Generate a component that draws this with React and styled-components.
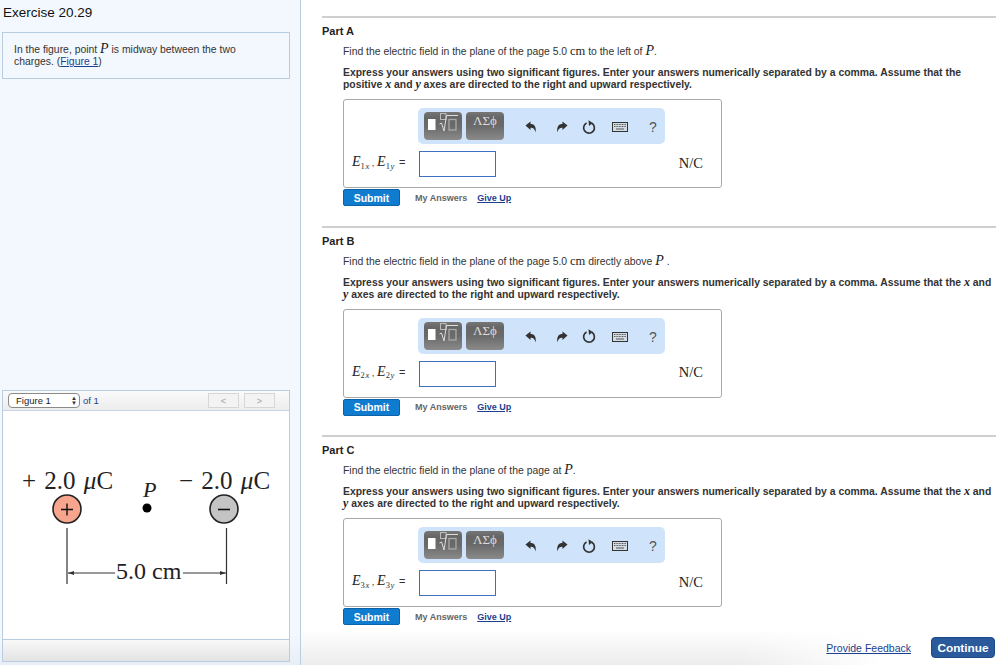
import React from "react";
import styled, { createGlobalStyle } from "styled-components";

const GlobalStyle = createGlobalStyle`
    html, body {
        margin: 0;
        padding: 0;
        background: #fff;
        font-family: "Liberation Sans", Arial, sans-serif;
        color: #222;
    }
`

const Page = styled.div`
    display: flex;
    width: 1008px;
    height: 665px;
    overflow: hidden;
`

const Sidebar = styled.div`
    display: flex;
    flex-direction: column;
    box-sizing: border-box;
    width: 301px;
    height: 665px;
    padding: 6px 10px 3px 2px;
    background:
        linear-gradient(to top, #e8eef6, rgba(243, 248, 254, 0) 30px),
        #f3f8fe;
    border-right: 1px solid #b9cde0;
`

const Heading = styled.h1`
    margin: 0 0 12px 1px;
    font-size: 13.5px;
    line-height: 14px;
    font-weight: normal;
    color: #111;
`

const Statement = styled.div`
    box-sizing: border-box;
    height: 47px;
    padding: 11px 11px;
    border: 1px solid #b9cde0;
    font-size: 10.4px;
    line-height: 12px;
    color: #333;
`

const MathVar = styled.i`
    font-family: "Liberation Serif", serif;
    font-size: ${(p) => p.size || 14}px;
    line-height: 0;
    color: #222;
`

const TextLink = styled.a`
    color: #1c3f8f;
    text-decoration: underline;
`

const FigurePanel = styled.div`
    display: flex;
    flex-direction: column;
    box-sizing: border-box;
    height: 272px;
    margin-top: auto;
    border: 1px solid #b9cde0;
    background: #fff;
`

const FigureBar = styled.div`
    display: flex;
    align-items: center;
    box-sizing: border-box;
    height: 20px;
    padding: 0 14px 0 5px;
    border-bottom: 1px solid #c6d6e6;
    background: linear-gradient(#fafafa, #ededed);
    font-size: 9.5px;
    color: #1c3f8f;
`

const FigureSelect = styled.div`
    display: flex;
    align-items: center;
    justify-content: space-between;
    box-sizing: border-box;
    width: 72px;
    height: 15px;
    margin-right: 3px;
    padding: 0 2px 0 7px;
    border: 1px solid #8a8a8a;
    border-radius: 4px;
    background: #fff;
    color: #222;
`

const SelectArrows = styled.span`
    font-size: 6px;
    line-height: 5px;
    text-align: center;
    color: #333;
`

const NavGroup = styled.div`
    display: flex;
    gap: 5px;
    margin-left: auto;
`

const NavButton = styled.div`
    display: flex;
    align-items: center;
    justify-content: center;
    box-sizing: border-box;
    width: 31px;
    height: 15px;
    border: 1px solid #d6d6d6;
    background: #f3f3f3;
    color: #b5b5b5;
    font-size: 9px;
    font-weight: bold;
`

const FigureBody = styled.div`
    flex: 1;
    min-height: 0;
`

const FigureFoot = styled.div`
    height: 21px;
    border-top: 1px solid #b9cde0;
    background: linear-gradient(#f9f9f9, #e3e3e3);
`

const Main = styled.div`
    position: relative;
    flex: 1;
    box-sizing: border-box;
    padding: 16px 12px 0 21px;
    background:
        linear-gradient(to right, rgba(255, 255, 255, 0) 62%, #fff 82%),
        linear-gradient(to top, #ececec, #fff 36px);
`

const PartBlock = styled.section`
    box-sizing: border-box;
    height: 209.6px;
    border-top: 2px solid #cfcfcf;
    padding-top: 7px;
`

const PartTitle = styled.h2`
    margin: 0 0 9px;
    font-size: 11px;
    line-height: 12px;
    font-weight: bold;
    color: #222;
`

const PartBody = styled.div`
    margin-left: 21px;
`

const Question = styled.p`
    margin: 0 0 9px;
    font-size: 10.4px;
    line-height: 12px;
    color: #333;
`

const Instructions = styled.p`
    margin: 0 0 8px;
    font-size: 10.4px;
    line-height: 12px;
    font-weight: bold;
    color: #333;
`

const AnswerBox = styled.div`
    display: flex;
    flex-direction: column;
    box-sizing: border-box;
    width: 379px;
    height: 89px;
    padding: 8px 18px 0 8px;
    border: 1px solid #a9a9a9;
    border-radius: 3px;
`

const Toolbar = styled.div`
    display: flex;
    align-items: center;
    box-sizing: border-box;
    width: 247px;
    height: 36px;
    margin-left: 66px;
    padding-left: 6px;
    background: #cfe4fb;
    border-radius: 5px;
`

const TemplateButton = styled.div`
    display: flex;
    justify-content: center;
    box-sizing: border-box;
    width: 38px;
    height: 28px;
    margin-right: 4px;
    border-radius: 4px;
    background: linear-gradient(#767676 0, #666 20%, #6a6a6a 50%, #8a8a8a 100%);
    color: #ddd;
    font-family: "Liberation Serif", serif;
    font-size: 13px;
    line-height: 18px;
`

const ToolIcon = styled.div`
    display: flex;
    justify-content: center;
    align-items: center;
    flex: none;
    width: ${(p) => p.width}px;
    margin-left: ${(p) => p.gap || 0}px;
    padding-top: 2px;
    color: #555;
    font-size: 14px;
`

const AnswerRow = styled.div`
    display: flex;
    align-items: center;
    margin-top: 7px;
    height: 26px;
`

const AnswerLabel = styled.div`
    width: 67px;
    padding-bottom: 4px;
    font-size: 9.5px;
    white-space: nowrap;
    color: #333;

    sub {
        font-family: "Liberation Serif", serif;
        font-size: 8.5px;
        line-height: 0;
        letter-spacing: 0.6px;
        margin-right: 2px;
    }
`

const LabelEquals = styled.span`
    margin-left: 2px;
    font-size: 11px;
`

const AnswerInput = styled.div`
    box-sizing: border-box;
    width: 77px;
    height: 26px;
    border: 1px solid #3f6fc0;
    background: #fff;
`

const Unit = styled.div`
    margin-left: auto;
    padding-bottom: 2px;
    font-family: "Liberation Serif", serif;
    font-size: 14.5px;
    color: #222;
`

const ActionRow = styled.div`
    display: flex;
    align-items: center;
    margin-top: 1px;
    height: 17px;
`

const SubmitButton = styled.div`
    display: flex;
    align-items: center;
    justify-content: center;
    box-sizing: border-box;
    width: 57px;
    height: 17px;
    margin-right: 15px;
    border: 1px solid #0b62a8;
    border-radius: 2px;
    background: #0f7ccf;
    color: #fff;
    font-size: 10.5px;
    font-weight: bold;
`

const MyAnswers = styled.span`
    margin-right: 10px;
    font-size: 9px;
    font-weight: bold;
    color: #666;
`

const GiveUp = styled(TextLink)`
    font-size: 9px;
    font-weight: bold;
`

const Footer = styled.div`
    position: absolute;
    right: 13px;
    bottom: 7px;
    display: flex;
    align-items: center;
    gap: 20px;
`

const FeedbackLink = styled(TextLink)`
    font-size: 10.5px;
`

const ContinueButton = styled.div`
    display: flex;
    align-items: center;
    justify-content: center;
    box-sizing: border-box;
    width: 64px;
    height: 21px;
    border: 1px solid #1c4a86;
    border-radius: 4px;
    background: #2a5a9c;
    color: #fff;
    font-size: 11.8px;
    font-weight: bold;
`

const UndoIcon = ({ flip }) => (
    <svg width="12" height="12" viewBox="0 0 13 13" style={flip ? { transform: "scaleX(-1)" } : undefined}>
        <path d="M0.5 5 L6 0.5 V3.3 C10 3.3 12.5 6 11.5 12.5 C10.5 8.6 9 7.3 6 7.3 V9.8 Z" fill="#333" />
    </svg>
)

const ResetIcon = () => (
    <svg width="15" height="15" viewBox="0 0 15 15">
        <path d="M9.8 3.2 A5.4 5.4 0 1 1 4.6 3" fill="none" stroke="#333" strokeWidth="1.7" />
        <path d="M6.5 0.3 L10.8 3 L7 6 Z" fill="#333" />
    </svg>
)

const KeyboardIcon = () => (
    <svg width="16" height="10" viewBox="0 0 16 10">
        <rect x="0.5" y="0.5" width="15" height="9" fill="#d4dde6" stroke="#333" />
        <path d="M2 2.5 H14 M2 4.5 H14" stroke="#555" strokeDasharray="1 0.6" />
        <path d="M4 7 H12" stroke="#555" />
    </svg>
)

const TemplateIcon = () => (
    <svg width="38" height="28" viewBox="0 0 38 28">
        <rect x="4" y="7" width="7.5" height="11" fill="#fff" />
        <rect x="16.5" y="1.5" width="5.5" height="6" fill="none" stroke="#bbb" />
        <path d="M15.5 12 L17.5 11 L20 19 L22.5 3.5 H34" fill="none" stroke="#ddd" />
        <rect x="25" y="7.5" width="7" height="10.5" fill="none" stroke="#aaa" strokeWidth="1.3" />
    </svg>
)

const Toolset = () => (
    <Toolbar>
        <TemplateButton>
            <TemplateIcon />
        </TemplateButton>
        <TemplateButton>ΛΣϕ</TemplateButton>
        <ToolIcon width={13} gap={16}><UndoIcon /></ToolIcon>
        <ToolIcon width={13} gap={18}><UndoIcon flip /></ToolIcon>
        <ToolIcon width={15} gap={14}><ResetIcon /></ToolIcon>
        <ToolIcon width={16} gap={15}><KeyboardIcon /></ToolIcon>
        <ToolIcon width={8} gap={21}>?</ToolIcon>
    </Toolbar>
)

const parts = [
    {
        title: "Part A",
        n: 1,
        question: <>Find the electric field in the plane of the page 5.0 <MathVar as="span" size={12.5}>cm</MathVar> to the left of <MathVar>P</MathVar>.</>,
        instructions: <>Express your answers using two significant figures. Enter your answers numerically separated by a comma. Assume that the positive <MathVar size={12}>x</MathVar> and <MathVar size={12}>y</MathVar> axes are directed to the right and upward respectively.</>,
    },
    {
        title: "Part B",
        n: 2,
        question: <>Find the electric field in the plane of the page 5.0 <MathVar as="span" size={12.5}>cm</MathVar> directly above <MathVar>P</MathVar> .</>,
        instructions: <>Express your answers using two significant figures. Enter your answers numerically separated by a comma. Assume that the <MathVar size={12}>x</MathVar> and <MathVar size={12}>y</MathVar> axes are directed to the right and upward respectively.</>,
    },
    {
        title: "Part C",
        n: 3,
        question: <>Find the electric field in the plane of the page at <MathVar>P</MathVar>.</>,
        instructions: <>Express your answers using two significant figures. Enter your answers numerically separated by a comma. Assume that the <MathVar size={12}>x</MathVar> and <MathVar size={12}>y</MathVar> axes are directed to the right and upward respectively.</>,
    },
]

const Part = ({ title, n, question, instructions }) => (
    <PartBlock>
        <PartTitle>{title}</PartTitle>
        <PartBody>
            <Question>{question}</Question>
            <Instructions>{instructions}</Instructions>
            <AnswerBox>
                <Toolset />
                <AnswerRow>
                    <AnswerLabel>
                        <MathVar>E</MathVar><sub>{n}<i>x</i></sub>, <MathVar>E</MathVar><sub>{n}<i>y</i></sub><LabelEquals>=</LabelEquals>
                    </AnswerLabel>
                    <AnswerInput />
                    <Unit>N/C</Unit>
                </AnswerRow>
            </AnswerBox>
            <ActionRow>
                <SubmitButton>Submit</SubmitButton>
                <MyAnswers>My Answers</MyAnswers>
                <GiveUp href="#">Give Up</GiveUp>
            </ActionRow>
        </PartBody>
    </PartBlock>
)

// figure coordinates are page pixels, the viewBox shifts them into the panel
const ChargeFigure = () => (
    <svg width="286" height="229" viewBox="3 411 286 229" fontFamily="Liberation Serif, serif" fill="#222">
        <text x="22" y="489" fontSize="25" wordSpacing="2">+ 2.0 <tspan fontStyle="italic">μ</tspan>C</text>
        <text x="179" y="489" fontSize="25" wordSpacing="2">− 2.0 <tspan fontStyle="italic">μ</tspan>C</text>
        <text x="143" y="497" fontSize="22" fontStyle="italic">P</text>
        <circle cx="147" cy="508" r="4.5" fill="#000" />
        <circle cx="67" cy="509" r="14" fill="#f7a58c" stroke="#222" strokeWidth="1.6" />
        <path d="M61 509.5 H73 M67 503.5 V515.5" stroke="#111" strokeWidth="1.4" />
        <circle cx="224" cy="509" r="14" fill="#c4c4c4" stroke="#222" strokeWidth="1.6" />
        <path d="M218 509.5 H230" stroke="#111" strokeWidth="1.6" />
        <path d="M67 528 V584 M226.5 528 V584" stroke="#333" strokeWidth="1.2" />
        <path d="M68 573 H115 M183 573 H226" stroke="#333" strokeWidth="1" />
        <path d="M68 573 L74 571 V575 Z M226 573 L220 571 V575 Z" fill="#333" />
        <text x="116" y="579" fontSize="24">5.0 cm</text>
    </svg>
)

const App = () => {
    return (
        <>
            <GlobalStyle />
            <Page>
                <Sidebar>
                    <Heading>Exercise 20.29</Heading>
                    <Statement>
                        In the figure, point <MathVar>P</MathVar> is midway between the two charges. (<TextLink href="#">Figure 1</TextLink>)
                    </Statement>
                    <FigurePanel>
                        <FigureBar>
                            <FigureSelect>
                                Figure 1
                                <SelectArrows>▲<br />▼</SelectArrows>
                            </FigureSelect>
                            of 1
                            <NavGroup>
                                <NavButton>&lt;</NavButton>
                                <NavButton>&gt;</NavButton>
                            </NavGroup>
                        </FigureBar>
                        <FigureBody>
                            <ChargeFigure />
                        </FigureBody>
                        <FigureFoot />
                    </FigurePanel>
                </Sidebar>
                <Main>
                    {parts.map((part) => (
                        <Part key={part.title} {...part} />
                    ))}
                    <Footer>
                        <FeedbackLink href="#">Provide Feedback</FeedbackLink>
                        <ContinueButton>Continue</ContinueButton>
                    </Footer>
                </Main>
            </Page>
        </>
    )
}

export default App;
